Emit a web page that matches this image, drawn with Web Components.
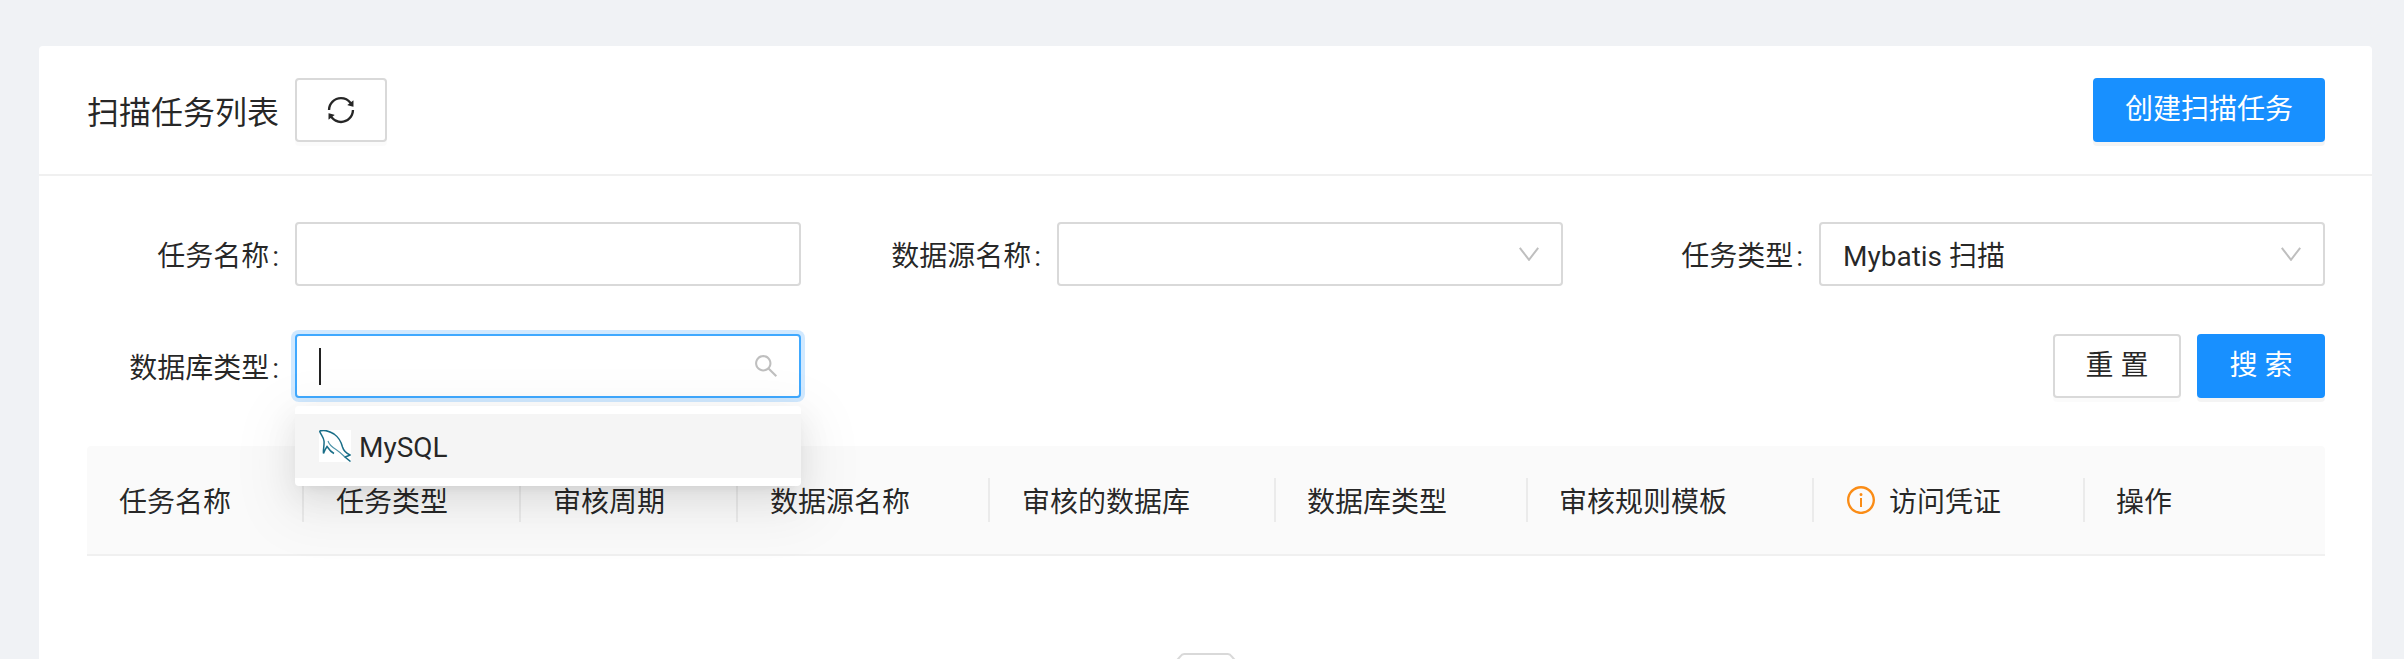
<!DOCTYPE html>
<html lang="zh">
<head>
<meta charset="utf-8">
<title>扫描任务列表</title>
<style>
  html, body { margin: 0; height: 100%; overflow: hidden; background: #f0f2f5; }
  body { font-family: Roboto, "Noto Sans CJK SC", sans-serif; }
</style>
</head>
<body>
<scan-page></scan-page>
<script>
const FONT = `Roboto, "Noto Sans CJK SC", sans-serif`;
const ICONS = {
  sync: 'M168 504.2c1-43.7 10-86.1 26.9-126 17.3-41 42.1-77.7 73.7-109.4S337 212.3 378 195c42.4-17.9 87.4-27 133.9-27s91.5 9.1 133.8 27A341.5 341.5 0 01755 268.8c9.9 9.9 19.2 20.4 27.8 31.4l-60.2 47a8 8 0 003 14.1l175.7 43c5 1.2 9.9-2.6 9.9-7.7l.8-180.9c0-6.7-7.7-10.5-12.9-6.3l-56.4 44.1C765.8 155.1 646.2 92 511.8 92 282.7 92 96.3 275.6 92 503.8a8 8 0 008 8.2h60c4.4 0 7.9-3.5 8-7.8zm756 7.8h-60c-4.4 0-7.9 3.5-8 7.8-1 43.7-10 86.1-26.9 126-17.3 41-42.1 77.8-73.7 109.4A342.45 342.45 0 01512.1 856a342.24 342.24 0 01-243.2-100.8c-9.9-9.9-19.2-20.4-27.8-31.4l60.2-47a8 8 0 00-3-14.1l-175.7-43c-5-1.2-9.9 2.6-9.9 7.7l-.7 181c0 6.7 7.7 10.5 12.9 6.3l56.4-44.1C258.2 868.9 377.8 932 512.2 932c229.2 0 415.5-183.7 419.8-411.8a8 8 0 00-8-8.2z',
  search: 'M909.6 854.5L649.9 594.8C690.2 542.7 712 479 712 412c0-80.2-31.3-155.4-87.9-212.1-56.6-56.7-132-87.9-212.1-87.9s-155.5 31.3-212.1 87.9C143.2 256.5 112 331.8 112 412c0 80.1 31.3 155.5 87.9 212.1C256.5 680.8 331.8 712 412 712c67 0 130.6-21.8 182.7-62l259.7 259.6a8.2 8.2 0 0011.6 0l43.6-43.5a8.2 8.2 0 000-11.6zM570.4 570.4C528 612.7 471.8 636 412 636s-116-23.3-158.4-65.6C211.3 528 188 471.8 188 412s23.3-116.1 65.6-158.4C296 211.3 352.2 188 412 188s116.1 23.2 158.4 65.6S636 352.2 636 412s-23.3 116.1-65.6 158.4z',
  info: 'M512 64C264.6 64 64 264.6 64 512s200.6 448 448 448 448-200.6 448-448S759.4 64 512 64zm0 820c-205.4 0-372-166.6-372-372s166.6-372 372-372 372 166.6 372 372-166.6 372-372 372zM464 336a48 48 0 1096 0 48 48 0 10-96 0zm72 112h-48c-4.4 0-8 3.6-8 8v272c0 4.4 3.6 8 8 8h48c4.4 0 8-3.6 8-8V456c0-4.4-3.6-8-8-8z'
};
const icon = (name, size, color, extra = '') =>
  `<svg width="${size}" height="${size}" viewBox="0 0 1024 1024" fill="${color}" style="display:block;flex:none;${extra}"><path d="${ICONS[name]}"/></svg>`;
const CHEVRON = `<svg width="20" height="14" viewBox="0 0 20 14" style="display:block;flex:none"><path d="M.8.8 10 12.800 19.200.8" fill="none" stroke="#bfbfbf" stroke-width="2"/></svg>`;

// everything is an antd form at 2x, so sizes are double the usual ones
class UiButton extends HTMLElement {
  connectedCallback() {
    this.attachShadow({ mode: 'open' });
    this.shadowRoot.innerHTML = `
      <style>
        :host { display: inline-flex; flex: none; }
        button {
          display: flex; align-items: center; justify-content: center;
          height: 64px; padding: 0 30px; box-sizing: border-box;
          font: 28px/44px ${FONT}; color: rgba(0,0,0,.85);
          background: #fff; border: 2px solid #d9d9d9; border-radius: 4px;
          box-shadow: 0 4px 0 rgba(0,0,0,.016);
        }
        :host([primary]) button {
          background: #1890ff; border-color: #1890ff; color: #fff;
          box-shadow: 0 4px 0 rgba(0,0,0,.045);
        }
        :host([square]) button { width: 92px; padding: 0; }
        :host([spaced]) button { width: 128px; padding: 0; }
      </style>
      <button type="button"><slot></slot></button>`;
  }
}
customElements.define('ui-button', UiButton);

class FormField extends HTMLElement {
  connectedCallback() {
    this.attachShadow({ mode: 'open' });
    this.shadowRoot.innerHTML = `
      <style>
        :host { display: grid; grid-template-columns: 208px 506px; align-items: center; height: 64px; }
        label { text-align: right; font-size: 28px; color: rgba(0,0,0,.85); white-space: nowrap; }
        label span { margin: 0 16px 0 3px; }
        .ctl { position: relative; }
      </style>
      <label>${this.getAttribute('label')}<span>:</span></label>
      <div class="ctl"><slot></slot></div>`;
  }
}
customElements.define('form-field', FormField);

class SelectBox extends HTMLElement {
  connectedCallback() {
    const focused = this.hasAttribute('focused');
    const value = this.getAttribute('value') || '';
    const kind = this.getAttribute('kind');
    this.attachShadow({ mode: 'open' });
    this.shadowRoot.innerHTML = `
      <style>
        :host { display: block; }
        .box {
          display: flex; align-items: center; justify-content: space-between;
          height: 64px; box-sizing: border-box; padding: 0 22px;
          background: #fff; border: 2px solid #d9d9d9; border-radius: 4px;
          font-size: 28px; color: rgba(0,0,0,.85);
        }
        :host([focused]) .box { border-color: #40a9ff; box-shadow: 0 0 0 4px rgba(24,144,255,.2); }
        .caret { width: 2px; height: 37px; background: #222; }
      </style>
      <div class="box">
        ${focused ? '<span class="caret"></span>' : `<span>${value}</span>`}
        ${kind === 'input' ? '' : focused ? icon('search', 28, 'rgba(0,0,0,.25)', 'margin-right:-3px') : CHEVRON}
      </div>
      <slot></slot>`;
  }
}
customElements.define('select-box', SelectBox);

class DropMenu extends HTMLElement {
  connectedCallback() {
    this.attachShadow({ mode: 'open' });
    this.shadowRoot.innerHTML = `
      <style>
        :host {
          display: block; position: absolute; z-index: 10; left: 0; right: 0; top: 72px;
          padding: 8px 0; background: #fff; border-radius: 4px;
          box-shadow: 0 6px 12px -8px rgba(0,0,0,.12), 0 12px 32px 0 rgba(0,0,0,.08), 0 18px 56px 16px rgba(0,0,0,.05);
        }
        .item {
          display: flex; align-items: center; gap: 8px;
          height: 64px; padding: 0 24px; background: #f5f5f5;
          font-size: 28px; color: rgba(0,0,0,.85);
        }
        .name { margin-top: 2px; }
      </style>
      <div class="item">
        <svg width="32" height="32" viewBox="0 0 32 32" style="flex:none;background:#fff" fill="none" stroke="#1a6e88" stroke-width="1.5">
          <path d="M.5 1C5-.5 11 1.500 15 4c5 3.500 7.500 9 8.500 13 1 3.500 3.500 6 7.500 8-2 1-3.500 1.500-5 2l5.500 4.500"/>
          <path d="M.5 1C2 5 4.500 7 5 11c.5 4-1 8-.5 12.500 1-2.500 2-5 3.500-7 2 3 4 5.500 7 7"/>
          <path d="M9 11c1 3.500 4 6 8 8.500 3 2 6 4.500 9 7.500" stroke-width="1.100" stroke="#4d93a8"/>
        </svg>
        <span class="name"><slot></slot></span>
      </div>`;
  }
}
customElements.define('drop-menu', DropMenu);

class HeadCell extends HTMLElement {
  connectedCallback() {
    this.attachShadow({ mode: 'open' });
    this.shadowRoot.innerHTML = `
      <style>
        :host {
          display: flex; align-items: center; justify-content: space-between;
          padding-left: 32px; font-size: 28px; color: rgba(0,0,0,.85); white-space: nowrap;
        }
        :host([tight]) { padding-left: 31px; }
        .txt { display: flex; align-items: center; gap: 12px; }
        :host(:not([last]))::after { content: ""; width: 2px; height: 44px; background: rgba(0,0,0,.06); flex: none; }
      </style>
      <span class="txt"><slot></slot></span>`;
  }
}
customElements.define('head-cell', HeadCell);

class ScanTable extends HTMLElement {
  connectedCallback() {
    this.attachShadow({ mode: 'open' });
    this.shadowRoot.innerHTML = `
      <style>
        :host { display: block; }
        .head {
          display: grid; height: 110px; box-sizing: border-box;
          grid-template-columns: 217px 217px 217px 252px 286px 252px 286px 271px 240px;
          background: #fafafa; border-bottom: 2px solid #f0f0f0; border-radius: 4px 4px 0 0;
        }
        .empty { display: flex; justify-content: center; padding-top: 96px; }
      </style>
      <div class="head">
        <head-cell>任务名称</head-cell>
        <head-cell>任务类型</head-cell>
        <head-cell>审核周期</head-cell>
        <head-cell>数据源名称</head-cell>
        <head-cell>审核的数据库</head-cell>
        <head-cell tight>数据库类型</head-cell>
        <head-cell tight>审核规则模板</head-cell>
        <head-cell tight>${icon('info', 32, '#fa8c16')}访问凭证</head-cell>
        <head-cell tight last>操作</head-cell>
      </div>
      <div class="empty">
        <svg width="128" height="82" viewBox="0 0 64 41">
          <g transform="translate(0 1)" fill="none" fill-rule="evenodd">
            <ellipse fill="#f5f5f5" cx="32" cy="33" rx="32" ry="7"/>
            <g fill-rule="nonzero" stroke="#d9d9d9">
              <path d="M55 12.76L44.854 1.258C44.367.474 43.656 0 42.907 0H21.093c-.749 0-1.46.474-1.947 1.257L9 12.761V22h46v-9.24z"/>
              <path d="M41.613 15.931c0-1.605.994-2.93 2.227-2.931H55v18.137C55 33.26 53.68 35 52.05 35h-40.1C10.32 35 9 33.259 9 31.137V13h11.16c1.233 0 2.227 1.323 2.227 2.928v.022c0 1.605 1.005 2.901 2.237 2.901h14.752c1.232 0 2.237-1.308 2.237-2.913v-.007z" fill="#fafafa"/>
            </g>
          </g>
        </svg>
      </div>`;
  }
}
customElements.define('scan-table', ScanTable);

class ScanPage extends HTMLElement {
  connectedCallback() {
    this.attachShadow({ mode: 'open' });
    this.shadowRoot.innerHTML = `
      <style>
        :host { display: block; padding: 46px 32px 0 39px; }
        .card { background: #fff; border-radius: 4px; height: 800px; }
        .top {
          display: flex; align-items: center; height: 128px; padding: 0 47px 0 48px;
          border-bottom: 2px solid #f0f0f0;
        }
        .title { font-size: 32px; color: rgba(0,0,0,.85); margin-right: 16px; }
        .spacer { flex: 1; }
        .body { padding: 46px 47px 0 48px; }
        form { display: grid; grid-template-columns: repeat(3, 714px); gap: 48px; }
        .actions { grid-column: 3; display: flex; justify-content: flex-end; gap: 16px; }
        scan-table { margin-top: 48px; }
      </style>
      <section class="card">
        <div class="top">
          <span class="title">扫描任务列表</span>
          <ui-button square>${icon('sync', 32, 'rgba(0,0,0,.85)')}</ui-button>
          <span class="spacer"></span>
          <ui-button primary>创建扫描任务</ui-button>
        </div>
        <div class="body">
          <form>
            <form-field label="任务名称"><select-box kind="input"></select-box></form-field>
            <form-field label="数据源名称"><select-box></select-box></form-field>
            <form-field label="任务类型"><select-box value="Mybatis 扫描"></select-box></form-field>
            <form-field label="数据库类型"><select-box focused><drop-menu>MySQL</drop-menu></select-box></form-field>
            <div class="actions">
              <ui-button spaced>重 置</ui-button>
              <ui-button spaced primary>搜 索</ui-button>
            </div>
          </form>
          <scan-table></scan-table>
        </div>
      </section>`;
  }
}
customElements.define('scan-page', ScanPage);
</script>
</body>
</html>
